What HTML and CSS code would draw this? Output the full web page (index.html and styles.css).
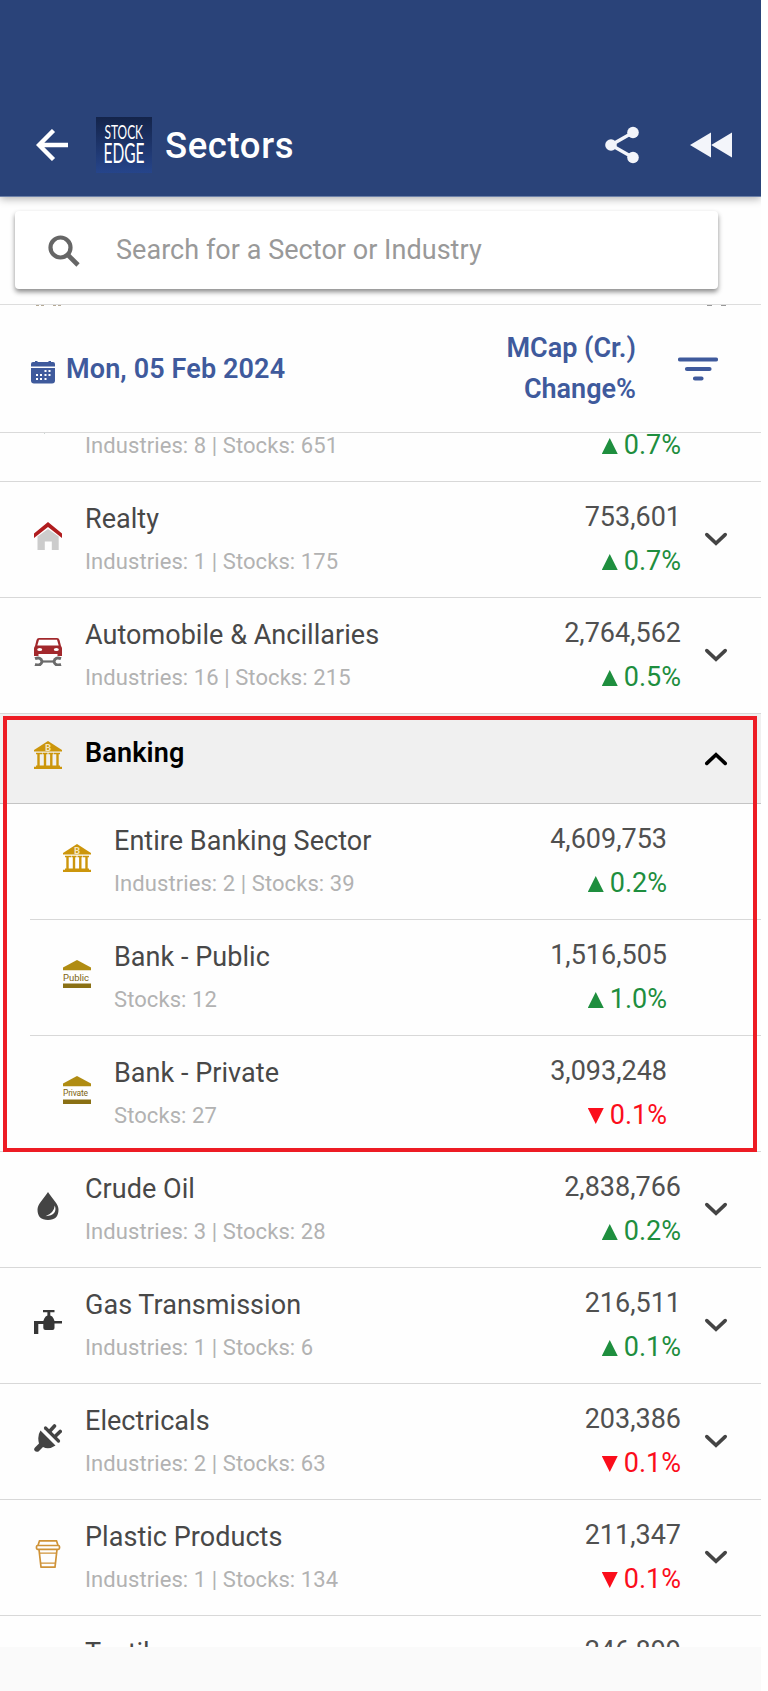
FILE: index.html
```html
<!DOCTYPE html>
<html lang="en">
    <head>
        <meta charset="UTF-8" />
        <meta name="viewport" content="width=device-width, initial-scale=1.0" />
        <title>Sectors</title>
        <link rel="stylesheet" href="styles.css">
    </head>
    <body>
        <svg class="defs">
            <symbol id="chevron" viewBox="0 0 24 14">
                <path d="M2.8 2.6L12 11.2L21.2 2.6" fill="none" stroke="currentColor" stroke-width="3.6" stroke-linecap="round" stroke-linejoin="miter" />
            </symbol>
            <symbol id="bank" viewBox="0 0 28 28">
                <path d="M14 0L28 9V10.5H0V9Z" fill="#cc960c" />
                <path d="M2 12.5h6M8.5 12.5h5M14.5 12.5h5M20 12.5h6" stroke="#cc960c" stroke-width="1.4" />
                <path d="M4.5 12V25M11 12V25M17.3 12V25M23.5 12V25" stroke="#cc960c" stroke-width="2.4" />
                <path d="M2 24.5h24v1.3h2v2.2H0v-2.2h2z" fill="#cc960c" />
                <text x="14" y="9.6" text-anchor="middle" font-family="Roboto, sans-serif" font-size="9.5" font-weight="700" fill="#f5e6bf">B</text>
            </symbol>
        </svg>
        <div class="app">
            <header class="topbar">
                <svg class="back" viewBox="0 0 32 32">
                    <path d="M32 16H3M17.5 1.5L3 16L17.5 30.5" fill="none" stroke="#fff" stroke-width="4.4" />
                </svg>
                <svg class="logo" viewBox="0 0 56 56">
                    <defs>
                        <linearGradient id="logo-bg" x1="0" y1="0" x2="0" y2="1">
                            <stop offset="0" stop-color="#14244a" />
                            <stop offset="1" stop-color="#26458b" />
                        </linearGradient>
                    </defs>
                    <rect width="56" height="56" fill="url(#logo-bg)" />
                    <text x="8.5" y="22" font-size="19" textLength="38.5" lengthAdjust="spacingAndGlyphs">STOCK</text>
                    <text x="7.5" y="46" font-size="27" textLength="41" lengthAdjust="spacingAndGlyphs">EDGE</text>
                </svg>
                <h1 class="title">Sectors</h1>
                <svg class="share" viewBox="0 0 34 38">
                    <path d="M28 6.5L6 19L28 31.5" fill="none" stroke="#f3f5fa" stroke-width="3.4" />
                    <g fill="#f3f5fa">
                        <circle cx="28" cy="6.5" r="5.8" />
                        <circle cx="6" cy="19" r="5.8" />
                        <circle cx="28" cy="31.5" r="5.8" />
                    </g>
                </svg>
                <svg class="rewind" viewBox="0 0 42 26">
                    <path d="M21 .5V25.5L0 13ZM42 .5V25.5L21.2 13Z" fill="#f3f5fa" />
                </svg>
            </header>

            <div class="search">
                <svg class="search-icon" viewBox="0 0 32 32">
                    <circle cx="12.5" cy="12.5" r="10" fill="none" stroke="#666" stroke-width="4.2" />
                    <path d="M19.5 19.5L30 30" stroke="#666" stroke-width="4.6" />
                </svg>
                <span class="placeholder">Search for a Sector or Industry</span>
            </div>

            <div class="peek">
                <i></i><i></i><i></i><i></i><b></b><b></b>
            </div>

            <div class="filters">
                <svg class="calendar" viewBox="0 0 24 24">
                    <path d="M4 1h2.5v1h11V1H20v1h2q2 0 2 2v2.5H0V4q0-2 2-2h2z" fill="#3f5a9c" />
                    <path d="M0 8h24v12.500q0 3-3 3H3q-3 0-3-3z" fill="#3f5a9c" />
                    <path d="M13.500 10.900h2M17.500 10.900h2M5 15h2M9 15h2M13.500 15h2M17.500 15h2M5 19h2M9 19h2M13.500 19h2" stroke="#fff" stroke-width="2" />
                </svg>
                <span class="date">Mon, 05 Feb 2024</span>
                <div class="metric">
                    <div>MCap (Cr.)</div>
                    <div>Change%</div>
                </div>
                <svg class="filter-icon" viewBox="0 0 40 24">
                    <path d="M2 2.500H38M9 12H31.500M17 21.500H23.500" stroke="#3f5a9c" stroke-width="4.200" stroke-linecap="round" />
                </svg>
            </div>

            <main class="list">
                <div class="row row-under">
                    <svg class="icon" viewBox="0 0 28 28"><path d="M9.500 24L10.500 28L11.500 24Z" fill="#3d5b55" /></svg>
                    <div class="info">
                        <div class="name"></div>
                        <div class="sub">Industries: 8 | Stocks: 651</div>
                    </div>
                    <div class="values">
                        <div class="mcap"></div>
                        <div class="change up">0.7%</div>
                    </div>
                </div>

                <div class="row">
                    <svg class="icon" viewBox="0 0 28 28">
                        <path d="M3.500 14.500L14 7L24.700 14.500V28H17.800V19.500H10.800V28H3.500Z" fill="#ccc" />
                        <path d="M14 0L28 11.500V16L14 5L0 16V11.500Z" fill="#b01c1e" />
                    </svg>
                    <div class="info">
                        <div class="name">Realty</div>
                        <div class="sub">Industries: 1 | Stocks: 175</div>
                    </div>
                    <div class="values">
                        <div class="mcap">753,601</div>
                        <div class="change up">0.7%</div>
                    </div>
                    <svg class="chevron"><use href="#chevron" /></svg>
                </div>

                <div class="row">
                    <svg class="icon" viewBox="0 0 28 28">
                        <path d="M5 0H23Q25 0 25.500 2L27 8Q28 9 28 10.500V18H23.500V16H4.500V18H0V10.500Q0 9 1 8L2.500 2Q3 0 5 0Z" fill="#a2282c" />
                        <path d="M5 1.800H23L24.700 7.500H3.300Z" fill="#fff" />
                        <ellipse cx="5.700" cy="11.500" rx="2.500" ry="1.500" fill="#fff" />
                        <ellipse cx="22.300" cy="11.500" rx="2.500" ry="1.500" fill="#fff" />
                        <path d="M8 23.500H20" stroke="#6b6b6b" stroke-width="2.200" />
                        <path d="M1 20.700Q7 18.500 8 23.500Q7 28.500 1 26.500M27 20.700Q21 18.500 20 23.500Q21 28.500 27 26.500" fill="none" stroke="#6b6b6b" stroke-width="3" />
                    </svg>
                    <div class="info">
                        <div class="name">Automobile &amp; Ancillaries</div>
                        <div class="sub">Industries: 16 | Stocks: 215</div>
                    </div>
                    <div class="values">
                        <div class="mcap">2,764,562</div>
                        <div class="change up">0.5%</div>
                    </div>
                    <svg class="chevron"><use href="#chevron" /></svg>
                </div>

                <section class="group">
                    <div class="row row-open">
                        <svg class="icon"><use href="#bank" /></svg>
                        <div class="info">
                            <div class="name">Banking</div>
                        </div>
                        <svg class="chevron chevron-up"><use href="#chevron" /></svg>
                    </div>
                    <div class="row row-child">
                        <svg class="icon"><use href="#bank" /></svg>
                        <div class="info">
                            <div class="name">Entire Banking Sector</div>
                            <div class="sub">Industries: 2 | Stocks: 39</div>
                        </div>
                        <div class="values">
                            <div class="mcap">4,609,753</div>
                            <div class="change up">0.2%</div>
                        </div>
                    </div>
                    <div class="row row-child">
                        <svg class="icon" viewBox="0 0 28 28">
                            <path d="M14 0L28 7.500V10.300H0V7.500Z" fill="#b08c12" />
                            <rect y="23.500" width="28" height="4.500" fill="#8a7014" />
                            <text class="tag" x="0" y="20.700" textLength="26">Public</text>
                        </svg>
                        <div class="info">
                            <div class="name">Bank - Public</div>
                            <div class="sub">Stocks: 12</div>
                        </div>
                        <div class="values">
                            <div class="mcap">1,516,505</div>
                            <div class="change up">1.0%</div>
                        </div>
                    </div>
                    <div class="row row-child row-last">
                        <svg class="icon" viewBox="0 0 28 28">
                            <path d="M14 0L28 7.500V10.300H0V7.500Z" fill="#b08c12" />
                            <rect y="23.500" width="28" height="4.500" fill="#8a7014" />
                            <text class="tag tag-small" x="0" y="20.200" textLength="25">Private</text>
                        </svg>
                        <div class="info">
                            <div class="name">Bank - Private</div>
                            <div class="sub">Stocks: 27</div>
                        </div>
                        <div class="values">
                            <div class="mcap">3,093,248</div>
                            <div class="change down">0.1%</div>
                        </div>
                    </div>
                    <div class="highlight"></div>
                </section>

                <div class="row">
                    <svg class="icon" viewBox="0 0 28 28">
                        <path d="M14 0Q16 3 21 9.500Q24.500 14 24.500 17.500Q24.500 28 14 28Q3.500 28 3.500 17.500Q3.500 14 7 9.500Q12 3 14 0Z" fill="#444" />
                        <path d="M20.800 13.500Q24 23 11.500 24.300Q20 21 20.800 13.500Z" fill="#fff" />
                    </svg>
                    <div class="info">
                        <div class="name">Crude Oil</div>
                        <div class="sub">Industries: 3 | Stocks: 28</div>
                    </div>
                    <div class="values">
                        <div class="mcap">2,838,766</div>
                        <div class="change up">0.2%</div>
                    </div>
                    <svg class="chevron"><use href="#chevron" /></svg>
                </div>

                <div class="row">
                    <svg class="icon" viewBox="0 0 28 28">
                        <path d="M9 2H20.500V4.300H16.300V7.500Q18.500 8 19.500 10.500L20.500 13H28V15.500H20.500V20Q20.500 22 18.500 22H11.500Q9.300 22 9.300 20V16H4.300V26H0V13H9.300L10.300 10.500Q11.500 8 13.400 7.500V4.300H9Z" fill="#363636" />
                    </svg>
                    <div class="info">
                        <div class="name">Gas Transmission</div>
                        <div class="sub">Industries: 1 | Stocks: 6</div>
                    </div>
                    <div class="values">
                        <div class="mcap">216,511</div>
                        <div class="change up">0.1%</div>
                    </div>
                    <svg class="chevron"><use href="#chevron" /></svg>
                </div>

                <div class="row">
                    <svg class="icon" viewBox="0 0 28 28">
                        <path d="M6.500 6.500L21.500 21.500Q15 26 9 23L4.500 27.500Q2 28.500 .5 26.500Q-.5 25 1 23.500L5 19.500Q3 12 6.500 6.500Z" fill="#444" />
                        <path d="M11.500 4L24.500 17" stroke="#444" stroke-width="3.200" stroke-linecap="round" />
                        <path d="M15.500 7.500L20.500 2M21 12.500L26.200 7.500" stroke="#444" stroke-width="3.600" stroke-linecap="round" />
                    </svg>
                    <div class="info">
                        <div class="name">Electricals</div>
                        <div class="sub">Industries: 2 | Stocks: 63</div>
                    </div>
                    <div class="values">
                        <div class="mcap">203,386</div>
                        <div class="change down">0.1%</div>
                    </div>
                    <svg class="chevron"><use href="#chevron" /></svg>
                </div>

                <div class="row">
                    <svg class="icon" viewBox="0 0 28 28">
                        <g fill="none" stroke="#cf9338" stroke-width="1.700" stroke-linejoin="round">
                            <path d="M4 5.500L5.500 .8H22.500L24 5.500" />
                            <rect x="2.500" y="5.500" width="23" height="3.800" rx="1.200" />
                            <path d="M5 9.500L7 27.200H21L23 9.500" />
                            <path d="M5.500 13.200H22.500M6.500 23.200H21.500" stroke-width="1.200" />
                        </g>
                    </svg>
                    <div class="info">
                        <div class="name">Plastic Products</div>
                        <div class="sub">Industries: 1 | Stocks: 134</div>
                    </div>
                    <div class="values">
                        <div class="mcap">211,347</div>
                        <div class="change down">0.1%</div>
                    </div>
                    <svg class="chevron"><use href="#chevron" /></svg>
                </div>

                <div class="row row-cut">
                    <span class="icon"></span>
                    <div class="info">
                        <div class="name">Textile</div>
                    </div>
                    <div class="values">
                        <div class="mcap">246,899</div>
                    </div>
                </div>
            </main>
            <footer class="bottom"></footer>
        </div>
    </body>
</html>
```
FILE: styles.css
```css
* {
    box-sizing: border-box;
}
body {
    margin: 0;
    background: #fff;
    font-family: Roboto, "Liberation Sans", sans-serif;
}
svg {
    display: block;
    flex: none;
}
.defs {
    width: 0;
    height: 0;
    position: absolute;
}
.app {
    display: flex;
    flex-direction: column;
    width: 761px;
    height: 1691px;
    background: #fefefe;
    overflow: hidden;
}

/* top bar */
.topbar {
    display: flex;
    align-items: center;
    height: 197px;
    padding: 93px 29px 0 36px;
    background: #2a4379;
    border-bottom: 1px solid #6c80a8;
    box-shadow: 0 2px 8px rgba(0, 0, 0, 0.3);
}
.back {
    width: 32px;
    height: 32px;
}
.logo {
    width: 56px;
    height: 56px;
    margin-left: 28px;
}
.logo text {
    font-family: Lato, sans-serif;
    fill: #fff;
}
.title {
    flex: 1;
    margin: 2px 0 0 13px;
    font-size: 36.5px;
    font-weight: 500;
    line-height: 42px;
    letter-spacing: 0.6px;
    color: #fff;
}
.share {
    width: 34px;
    height: 38px;
}
.rewind {
    width: 42px;
    height: 26px;
    margin-left: 51px;
}

/* search box */
.search {
    display: flex;
    align-items: center;
    width: 703px;
    height: 78px;
    margin: 14px 0 15px 15px;
    padding-left: 33px;
    background: #fff;
    border-radius: 4px;
    box-shadow: 0 3px 5px rgba(0, 0, 0, 0.45);
}
.search-icon {
    width: 32px;
    height: 32px;
    margin-top: 2px;
}
.placeholder {
    margin-left: 36px;
    font-size: 27px;
    line-height: 32px;
    letter-spacing: 0.04px;
    color: #999;
}

/* tops of the row that scrolled away */
.peek {
    display: flex;
    height: 2px;
    padding-left: 36px;
    border-top: 1px solid #ddd;
}
.peek i {
    width: 3px;
    margin-right: 2px;
    background: #b5aa96;
}
.peek i:nth-child(2) {
    margin-right: 9px;
}
.peek b {
    width: 5px;
    margin-right: 9px;
    background: #999;
}
.peek i + b {
    margin-left: 644px;
}

/* date and metric bar */
.filters {
    display: flex;
    align-items: center;
    height: 127px;
    padding: 0 43px 0 31px;
    border-bottom: 1px solid #dadada;
    font-size: 27px;
    font-weight: 600;
    color: #3f5a9c;
}
.calendar {
    width: 24px;
    height: 24px;
    margin-top: 5px;
}
.date {
    flex: 1;
    margin-left: 11px;
    letter-spacing: 0.12px;
}
.metric {
    line-height: 41px;
    text-align: right;
}
.filter-icon {
    width: 40px;
    height: 24px;
    margin-left: 42px;
}

/* sector list */
.list {
    height: 1214px;
    overflow: hidden;
}
.row {
    display: flex;
    height: 116px;
    padding: 0 33px 0 34px;
    border-bottom: 1px solid #d8d8d8;
}
.row-under {
    margin-top: -67px;
}
.icon {
    width: 28px;
    height: 28px;
    margin-top: 40px;
}
.info {
    flex: 1;
    padding: 21px 0 0 23px;
}
.name {
    height: 32px;
    font-size: 27px;
    line-height: 32px;
    letter-spacing: 0.04px;
    color: #484848;
}
.sub {
    margin-top: 14px;
    font-size: 22px;
    line-height: 26px;
    letter-spacing: 0.08px;
    color: #b2b2b2;
}
.values {
    padding-top: 19px;
    font-size: 27px;
    line-height: 32px;
    text-align: right;
    color: #505050;
}
.mcap {
    height: 32px;
}
.change {
    display: flex;
    justify-content: flex-end;
    margin-top: 12px;
}
.change::before {
    content: "";
    width: 16px;
    height: 16px;
    margin: 9px 6px 0 0;
    background: currentColor;
    clip-path: polygon(50% 0, 100% 100%, 0 100%);
}
.up {
    color: #1e8e3e;
}
.down {
    color: #fb0d1b;
}
.down::before {
    clip-path: polygon(0 0, 100% 0, 50% 100%);
}
.chevron {
    width: 24px;
    height: 14px;
    margin: 50px 0 0 23px;
    color: #444;
}
.chevron-up {
    margin-top: 38px;
    color: #000;
    transform: scaleY(-1);
}
.row-under .values,
.row-cut .values {
    margin-right: 47px;
}

/* expanded sector */
.group {
    position: relative;
}
.row-open {
    height: 90px;
    background: #f0f0f0;
    border-color: #c4c4c4;
}
.row-open .icon {
    margin-top: 27px;
}
.row-open .info {
    padding-top: 23px;
}
.row-open .name {
    font-weight: 600;
    letter-spacing: 0.15px;
    color: #000;
}
.row-child {
    margin-left: 30px;
    padding: 0 94px 0 33px;
}
.row-last {
    margin-left: 0;
    padding-left: 63px;
}
.tag {
    font-size: 9.5px;
    fill: #7d6410;
}
.tag-small {
    font-size: 8.5px;
}
.highlight {
    position: absolute;
    top: 2px;
    left: 3px;
    width: 754px;
    height: 436px;
    border: 4px solid #ed1c24;
}
.row-cut {
    border: 0;
}
.bottom {
    flex: 1;
    background: #fafafa;
}
```
